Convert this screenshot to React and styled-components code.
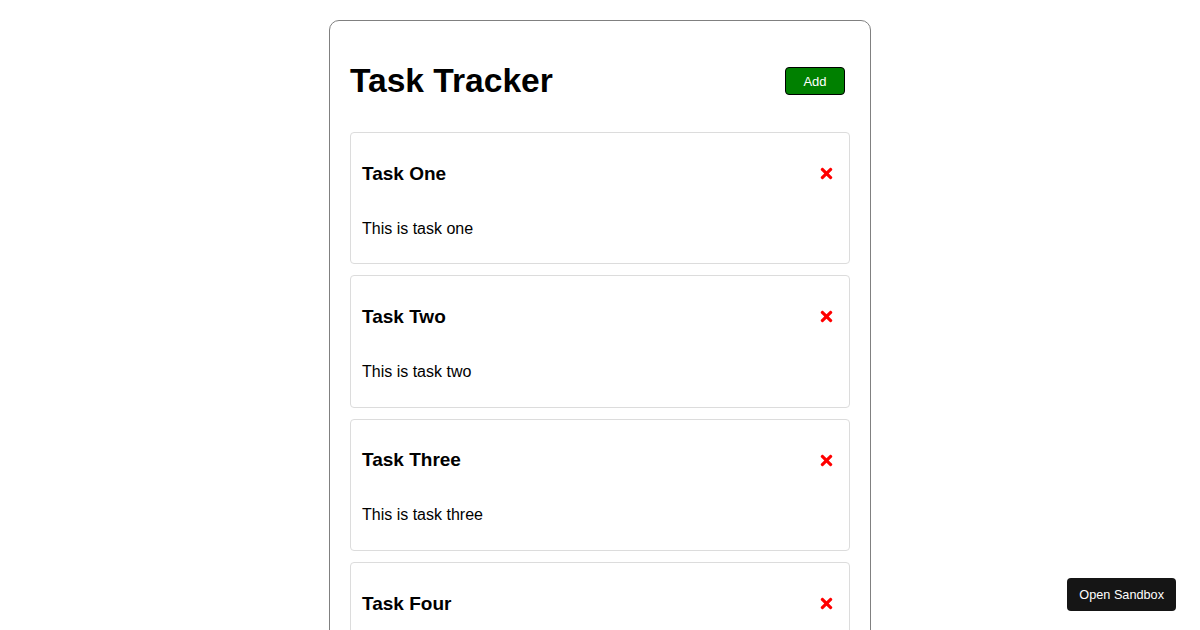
import React from 'react';
import styled, { createGlobalStyle } from 'styled-components';
import { FaTimes } from 'react-icons/fa';

const GlobalStyle = createGlobalStyle`
  * {
    box-sizing: border-box;
  }
  body {
    margin: 0;
    font-family: "Liberation Sans", Arial, sans-serif;
    color: #000;
    background: #fff;
  }
`;

const tasks = [
  { id: 1, text: 'Task One', desc: 'This is task one' },
  { id: 2, text: 'Task Two', desc: 'This is task two' },
  { id: 3, text: 'Task Three', desc: 'This is task three' },
  { id: 4, text: 'Task Four', desc: 'This is task four' },
];

const App = () => (
  <>
    <GlobalStyle />
    <Container>
      <Header>
        <Title>Task Tracker</Title>
        <AddButton type="button">Add</AddButton>
      </Header>
      {tasks.map(task => (
        <TaskCard key={task.id}>
          <TaskHead>
            <TaskTitle>{task.text}</TaskTitle>
            <DeleteIcon />
          </TaskHead>
          <TaskDesc>{task.desc}</TaskDesc>
        </TaskCard>
      ))}
    </Container>
    <SandboxButton type="button">Open Sandbox</SandboxButton>
  </>
);

export default App;

// styles

const Container = styled.div`
  width: 542px;
  margin: 20px auto;
  padding: 20px;
  border: 1px solid #808080;
  border-radius: 10px;
`;

const Header = styled.header`
  display: flex;
  justify-content: space-between;
  align-items: center;
  margin-bottom: 11px;
`;

const Title = styled.h1`
  font-size: 33.6px;
  font-weight: bold;
  margin: 21px 0;
  line-height: 38px;
`;

const AddButton = styled.button`
  width: 60px;
  height: 28px;
  margin-right: 5px;
  background: #008000;
  color: #fff;
  border: 1px solid #000;
  border-radius: 4px;
  font-family: "Liberation Sans", Arial, sans-serif;
  font-size: 13px;
  cursor: pointer;
`;

const TaskCard = styled.div`
  border: 1px solid #dcdcdc;
  border-radius: 4px;
  padding: 10px 10px 10px 11px;
  margin-bottom: 11px;
`;

const TaskHead = styled.div`
  display: flex;
  justify-content: space-between;
  align-items: center;
`;

const TaskTitle = styled.h3`
  font-size: 19px;
  font-weight: bold;
  margin: 19.7px 0 18.7px;
  line-height: 22.5px;
`;

const DeleteIcon = styled(FaTimes)`
  color: #ff0000;
  font-size: 17px;
  margin-right: 4px;
  cursor: pointer;
`;

const TaskDesc = styled.p`
  font-size: 16px;
  margin: 16px 0 15px;
  line-height: 18.4px;
`;

const SandboxButton = styled.button`
  position: fixed;
  right: 24px;
  bottom: 19px;
  height: 33px;
  padding: 0 12px;
  background: #151515;
  color: #fff;
  border: none;
  border-radius: 4px;
  font-family: "Liberation Sans", Arial, sans-serif;
  font-size: 12.7px;
  cursor: pointer;
`;
